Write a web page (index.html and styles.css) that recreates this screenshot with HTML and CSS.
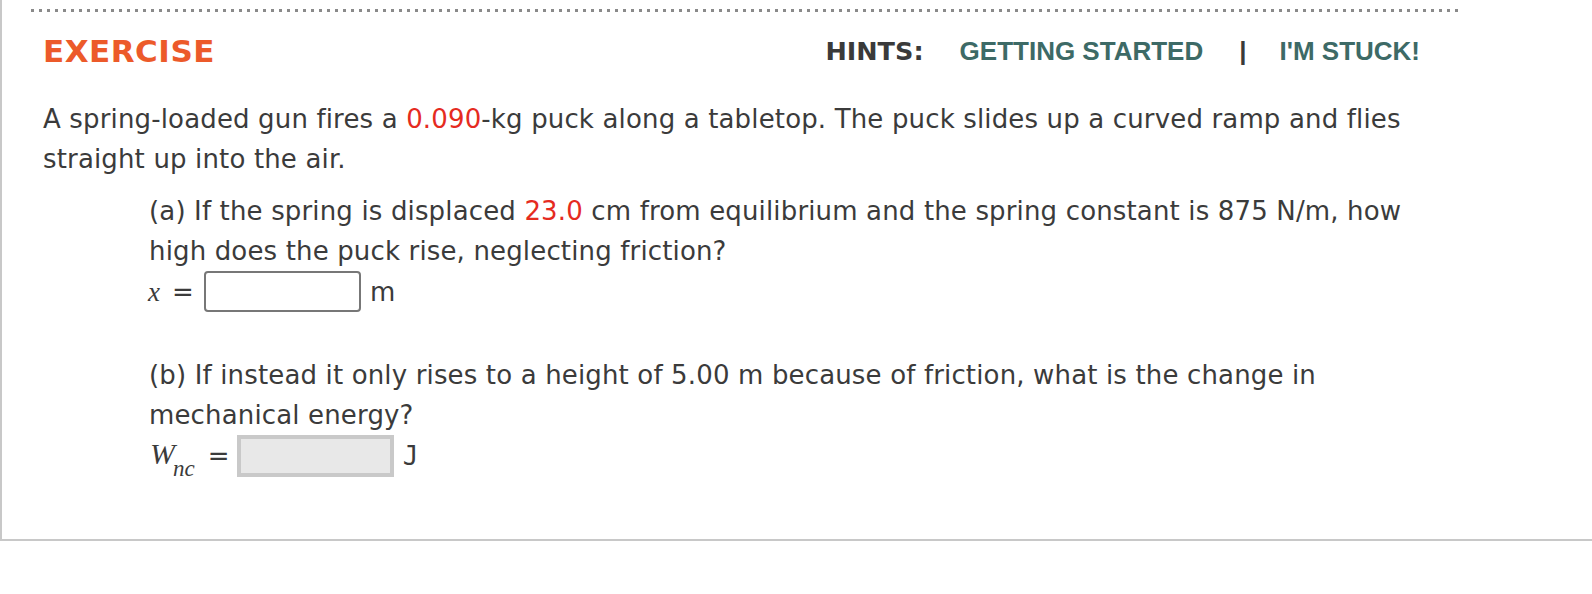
FILE: index.html
```html
<!DOCTYPE html>
<html lang="en">
<head>
<meta charset="utf-8">
<title>Exercise</title>
<link rel="stylesheet" href="styles.css">
</head>
<body>
<div class="exercise">
  <div class="inner">
    <div class="rule"></div>
    <div class="content">
      <div class="head">
        <h2 class="title">EXERCISE</h2>
        <div class="hints">
          <span class="hint-label">HINTS:</span>
          <a class="hint-link hint-start">GETTING STARTED</a>
          <span class="hint-sep">|</span>
          <a class="hint-link hint-stuck">I'M STUCK!</a>
        </div>
      </div>
      <p class="intro">A spring-loaded gun fires a <span class="num">0.090</span>-kg puck along a tabletop. The puck slides up a curved ramp and flies<br>straight up into the air.</p>
      <div class="part part-a">
        <p class="question">(a) If the spring is displaced <span class="num">23.0</span> cm from equilibrium and the spring constant is 875 N/m, how<br>high does the puck rise, neglecting friction?</p>
        <div class="answer">
          <span class="var var-x">x</span>
          <span class="eq">=</span>
          <input class="box box-open" type="text" aria-label="x">
          <span class="unit">m</span>
        </div>
      </div>
      <div class="part part-b">
        <p class="question">(b) If instead it only rises to a height of 5.00 m because of friction, what is the change in<br>mechanical energy?</p>
        <div class="answer">
          <span class="var var-w">W<sub class="sub">nc</sub></span>
          <span class="eq eq-b">=</span>
          <input class="box box-locked" type="text" aria-label="Wnc" disabled>
          <span class="unit unit-j">J</span>
        </div>
      </div>
    </div>
  </div>
</div>
</body>
</html>
```
FILE: styles.css
```css
html, body {
  margin: 0;
  padding: 0;
  background: #ffffff;
}

body {
  font-family: "DejaVu Sans", Verdana, sans-serif;
  font-size: 26px;
  line-height: 40px;
  letter-spacing: 0.15px;
  color: #3b3b3b;
}

.exercise {
  border-left: 2px solid #c8c8c8;
  border-bottom: 2px solid #c8c8c8;
  padding-top: 9px;
  padding-bottom: 62px;
}

.inner {
  margin: 0 134px 0 29px;
}

.rule {
  height: 3px;
  background-image: linear-gradient(to right, #8a8a8a 3px, transparent 3px);
  background-size: 8px 3px;
  background-repeat: repeat-x;
}

.content {
  padding-left: 12px;
}

.head {
  display: flex;
  align-items: flex-start;
  margin-top: 19px;
  height: 40px;
}

.title {
  margin: 0;
  font-family: "DejaVu Sans", Verdana, sans-serif;
  font-weight: bold;
  font-size: 31px;
  line-height: 40px;
  color: #ec5a2a;
  letter-spacing: 0.5px;
}

.hints {
  display: flex;
  align-items: baseline;
  margin-left: auto;
  margin-right: 38px;
  font-weight: bold;
  line-height: 40px;
  letter-spacing: 0;
  white-space: nowrap;
}

.hint-label {
  font-family: "DejaVu Sans", Verdana, sans-serif;
  font-size: 25.5px;
  color: #3a3a3a;
}

.hint-link {
  font-family: "Liberation Sans", Arial, sans-serif;
  font-size: 26px;
  color: #3d6a66;
}

.hint-start {
  margin-left: 36px;
}

.hint-sep {
  font-family: "Liberation Sans", Arial, sans-serif;
  font-size: 26px;
  color: #3a3a3a;
  margin-left: 36px;
}

.hint-stuck {
  margin-left: 33px;
}

.intro {
  margin: 28px 0 0;
}

.num {
  color: #e52b1f;
}

.part {
  margin-left: 106px;
}

.part-a {
  margin-top: 12px;
}

.part-b {
  margin-top: 43px;
}

.question {
  margin: 0;
}

.answer {
  display: flex;
  align-items: center;
}

.var {
  font-family: "Liberation Serif", "Times New Roman", serif;
  font-style: italic;
  font-size: 27px;
  letter-spacing: 0;
  color: #3b3b3b;
}

.var-x {
  margin-left: -1px;
}

.var-w {
  margin-left: 1px;
  font-size: 30px;
  margin-top: -4px;
}

.sub {
  font-size: 23px;
  vertical-align: -12px;
  line-height: 0;
  margin-left: -2px;
}

.eq {
  margin-left: 12px;
}

.eq-b {
  margin-left: 13px;
}

.box {
  box-sizing: border-box;
  width: 157px;
  margin: 0 0 0 10px;
  padding: 0;
  font: inherit;
}

.box-open {
  height: 41px;
  border: 2px solid #777777;
  border-radius: 4px;
  background: #ffffff;
}

.box-locked {
  height: 42px;
  margin-left: 7px;
  border: 4px solid #c9c9c9;
  border-radius: 0;
  background: #e8e8e8;
}

.unit {
  margin-left: 9px;
}

.unit-j {
  margin-left: 9px;
  font-family: "DejaVu Sans Mono", monospace;
}
```
